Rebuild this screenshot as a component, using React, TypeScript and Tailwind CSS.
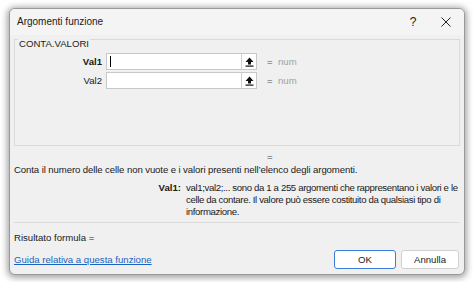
import React from 'react';

function ArrowBtn() {
  return (
    <div className="flex h-full w-[15px] items-center justify-center border-l border-[#d0d0d0] bg-white">
      <svg width="9" height="10" viewBox="0 0 9 10">
        <path d="M4.5 0.5 L8.5 5 L6 5 L6 7.5 L3 7.5 L3 5 L0.5 5 Z" fill="#111" />
        <rect x="0.5" y="8.5" width="8" height="1.2" fill="#111" />
      </svg>
    </div>
  );
}

function ArgRow({ label, bold, cursor }: { label: string; bold?: boolean; cursor?: boolean }) {
  return (
    <div className="flex h-[17px] items-center">
      <div className={`w-[91px] pr-[4px] text-right ${bold ? 'font-bold' : ''}`}>{label}</div>
      <div className="flex h-[17px] w-[151px] border border-[#c8c8c8] bg-white">
        <div className="flex flex-1 items-center pl-[3px]">
          {cursor && <div className="h-[11px] w-px bg-black" />}
        </div>
        <ArrowBtn />
      </div>
      <div className="ml-[10px] w-[11px] text-[#555]">=</div>
      <div className="text-[#a0a0a0]">num</div>
    </div>
  );
}

export default function App() {
  return (
    <div
      className="flex h-[282px] w-[474px] bg-white px-[9px] pt-[8px] pb-[7px] text-[9.6px] leading-[12px] text-[#1a1a1a]"
      style={{ fontFamily: '"Liberation Sans", Arial, sans-serif' }}
    >
      <div className="flex flex-1 flex-col overflow-hidden rounded-[6px] border border-[#9a9a9a] bg-[#f0f0f0] shadow-[0_1px_6px_2px_rgba(0,0,0,0.35)]">
        {/* title bar */}
        <div className="flex h-[26px] shrink-0 items-center bg-[#f4f4f4] pl-[7px]">
          <div className="flex-1 text-[10px]">Argomenti funzione</div>
          <div className="flex w-[30px] shrink-0 justify-center text-[12px]">?</div>
          <div className="flex h-[26px] w-[36px] shrink-0 items-center justify-center">
            <svg width="10" height="10" viewBox="0 0 10 10">
              <path d="M0.5 0.5 L9.5 9.5 M9.5 0.5 L0.5 9.5" stroke="#222" strokeWidth="1" />
            </svg>
          </div>
        </div>

        <div className="flex flex-1 flex-col px-[4px]">
          {/* group box */}
          <div className="relative mt-[4px] h-[107px] shrink-0 border border-[#dadada] pt-[12px]">
            <div className="absolute left-[3px] top-[-2px] bg-[#f0f0f0] px-[1px]">CONTA.VALORI</div>
            <div className="flex flex-col gap-[2px] pt-[1px]">
              <ArgRow label="Val1" bold cursor />
              <ArgRow label="Val2" />
            </div>
          </div>

          <div className="mt-[5px] h-[12px] shrink-0 pl-[253px] text-[#444]">=</div>
          <div className="mt-[1px] shrink-0 tracking-[-0.1px]">Conta il numero delle celle non vuote e i valori presenti nell’elenco degli argomenti.</div>

          <div className="mt-[6px] flex shrink-0">
            <div className="w-[172px] shrink-0 pr-[5px] text-right font-bold">Val1:</div>
            <div className="flex flex-col whitespace-nowrap tracking-[-0.35px]">
              <span>val1;val2;... sono da 1 a 255 argomenti che rappresentano i valori e le</span>
              <span>celle da contare. Il valore può essere costituito da qualsiasi tipo di</span>
              <span>informazione.</span>
            </div>
          </div>

          <div className="mt-[4px] shrink-0 border-t border-[#dcdcdc]" />

          <div className="mt-[9px] shrink-0">Risultato formula =</div>

          <div className="mt-[6px] flex shrink-0 items-center">
            <div className="flex-1 text-[#1a63c0] underline">Guida relativa a questa funzione</div>
            <div className="flex h-[19px] w-[62px] items-center justify-center rounded-[3px] border border-[#3b7dd8] bg-white">OK</div>
            <div className="ml-[5px] mr-[1px] flex h-[19px] w-[58px] items-center justify-center rounded-[3px] border border-[#d0d0d0] bg-white">Annulla</div>
          </div>
        </div>
      </div>
    </div>
  );
}
